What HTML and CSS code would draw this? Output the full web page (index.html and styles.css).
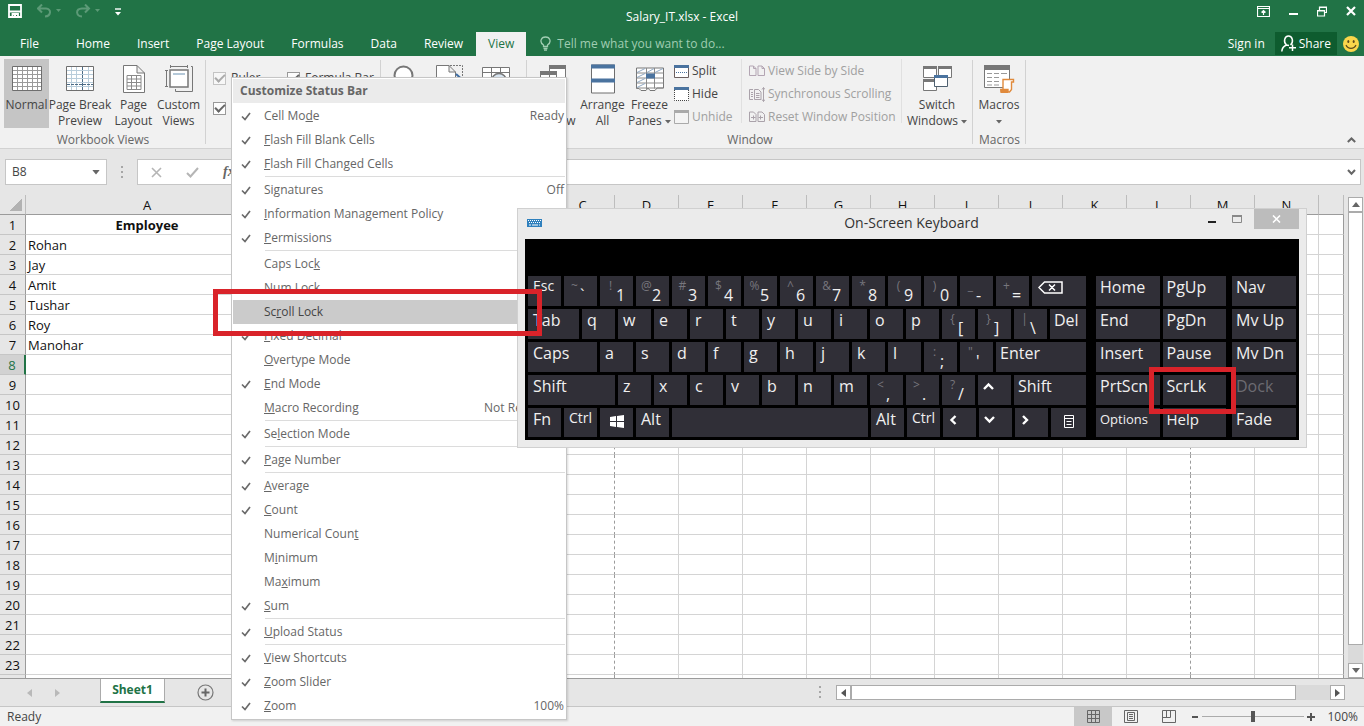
FILE: index.html
```html
<!DOCTYPE html>
<html lang="en">
<head>
    <meta charset="UTF-8">
    <meta name="viewport" content="width=device-width, initial-scale=1.0">
    <title>Salary_IT.xlsx - Excel</title>
    <link rel="stylesheet" href="styles.css">
</head>
<body>

<svg class="symbols" width="0" height="0">
    <symbol id="check" viewBox="0 0 10 9"><path d="M1 4.5 L4 7.5 L9 1" fill="none" stroke="#6a6a6a" stroke-width="1.7"/></symbol>
    <symbol id="down" viewBox="0 0 6 4"><path d="M0 0 H6 L3 3.5 Z" fill="currentColor"/></symbol>
</svg>

<header>
    <div class="title-bar">
        <div class="quick">
            <button aria-label="Save"><svg width="14" height="14" viewBox="0 0 14 14"><path d="M1 1 H13 V13 H1 Z M1 7.5 H13 M4.5 13 V10 H10 V13" fill="none" stroke="#fff" stroke-width="1.8"/><path d="M6 10 h2 v3 h-2 z" fill="#fff"/></svg></button>
            <button class="faded" aria-label="Undo"><svg width="24" height="14" viewBox="0 0 24 14"><path d="M1 4.5 H9 C15 5 14 12 8 12.5 M5 0.5 L1 4.5 L5 8.5" fill="none" stroke="currentColor" stroke-width="2"/><path d="M19 5 h5 l-2.5 3 z" fill="currentColor"/></svg></button>
            <button class="faded" aria-label="Redo"><svg width="24" height="14" viewBox="0 0 24 14"><path d="M13 4.5 H6 C-1 5 0 12 6 12.5 M9 0.5 L13 4.5 L9 8.5" fill="none" stroke="currentColor" stroke-width="2"/><path d="M19 5 h5 l-2.5 3 z" fill="currentColor"/></svg></button>
            <button aria-label="Customize toolbar"><svg width="6" height="8" viewBox="0 0 6 8"><path d="M0 1 H6" stroke="#fff" stroke-width="1.4"/><path d="M0 4 h6 l-3 3.5 z" fill="#fff"/></svg></button>
        </div>
        <h1>Salary_IT.xlsx - Excel</h1>
        <div class="window-buttons">
            <button aria-label="Ribbon options"><svg width="13" height="11" viewBox="0 0 13 11"><path d="M.5 .5 H12.5 V10.5 H.5 Z M.5 2.5 H12.5 M6.5 9 V4.5 M4.5 6.5 L6.5 4.5 L8.5 6.5" fill="none" stroke="#fff" stroke-width="1.2"/></svg></button>
            <button aria-label="Minimize"><svg width="9" height="11" viewBox="0 0 9 11"><path d="M0 8 H9" stroke="#fff" stroke-width="2"/></svg></button>
            <button aria-label="Restore"><svg width="10" height="11" viewBox="0 0 10 11"><path d="M2.5 4 V1 H9.5 V6.5 H7.5 M.5 4.5 H7.5 V10 H.5 Z M.5 5 H7.5 M2.5 1.5 H9.5" fill="none" stroke="#fff" stroke-width="1.2"/></svg></button>
            <button aria-label="Close"><svg width="10" height="10" viewBox="0 0 10 10"><path d="M1 1 L9 9 M9 1 L1 9" stroke="#fff" stroke-width="2.2"/></svg></button>
        </div>
    </div>
    <nav class="tabs">
        <a href="#" class="file">File</a>
        <a href="#">Home</a>
        <a href="#">Insert</a>
        <a href="#">Page Layout</a>
        <a href="#">Formulas</a>
        <a href="#">Data</a>
        <a href="#">Review</a>
        <a href="#" class="active">View</a>
        <label class="tell">
            <svg width="11" height="15" viewBox="0 0 11 15"><path d="M3.5 10.5 V9 C-1 6 1 1 5.500 1 C10 1 12 6 7.500 9 V10.500 Z M3.500 12.500 H7.500 M4 14.200 H7" fill="none" stroke="#a0cdb2" stroke-width="1.300"/></svg>
            <input type="text" placeholder="Tell me what you want to do..." aria-label="Tell me what you want to do">
        </label>
        <a href="#" class="sign-in">Sign in</a>
        <button class="share"><svg width="16" height="17" viewBox="0 0 16 17"><path d="M.8 16.500 C1 12.500 3 11 5.500 10 C2 7 3.500 1 7.500 1 C11.500 1 13 7 9.500 10 M5.500 10 L8 10.500 M11.500 9.500 V16 M8 12.800 H15" fill="none" stroke="#fff" stroke-width="1.500"/></svg>Share</button>
        <button class="smiley" aria-label="Feedback"><svg width="16" height="16" viewBox="0 0 16 16"><circle cx="8" cy="8" r="8" fill="#fbd64b"/><ellipse cx="5.300" cy="5.500" rx="1" ry="1.500" fill="#5d4a1b"/><ellipse cx="10.700" cy="5.500" rx="1" ry="1.500" fill="#5d4a1b"/><path d="M3 9 C5 13.500 11 13.500 13 9" fill="none" stroke="#5d4a1b" stroke-width="1.200"/></svg></button>
    </nav>
</header>

<section class="ribbon">
    <div class="group views">
        <div class="tools">
            <button class="big on"><svg width="30" height="26" viewBox="0 0 30 26"><path d="M.5 .5 H29.500 V24.500 H.5 Z" fill="#fff" stroke="#6e6e6e"/><path d="M1 4.500 H29 M1 8.500 H29 M1 12.500 H29 M1 16.500 H29 M1 20.500 H29 M5.500 1 V24 M10.500 1 V24 M15.500 1 V24 M20.500 1 V24 M25.500 1 V24" stroke="#9a9a9a"/></svg><span>Normal</span></button>
            <button class="big"><svg width="28" height="26" viewBox="0 0 28 26"><path d="M.5 .5 H27.500 V24.500 H.5 Z" fill="#fff" stroke="#6e6e6e"/><path d="M1 4.500 H27 M1 8.500 H27 M1 12.500 H27 M1 16.500 H27 M1 20.500 H27 M5.500 1 V24 M10.500 1 V24 M22.500 1 V24" stroke="#b9cddb"/><path d="M16.500 1 V24 M1 18.500 H27" stroke="#4c6b85" stroke-dasharray="3 1"/></svg><span>Page Break<br>Preview</span></button>
            <button class="big"><svg width="22" height="28" viewBox="0 0 22 28"><path d="M.5 .5 H14 L21.500 8 V27.500 H.5 Z M14 .5 V8 H21.500" fill="#fff" stroke="#777"/><path d="M4 10.500 H18 V24.500 H4 Z M4 14 H18 M4 17.500 H18 M4 21 H18 M8.500 10.500 V24.500 M13.500 10.500 V24.500" fill="none" stroke="#8a8a8a"/></svg><span>Page<br>Layout</span></button>
            <button class="big"><svg width="28" height="28" viewBox="0 0 28 28"><path d="M1.500 5 V22 M0 5.500 H3 M0 21.500 H3 M5 1.500 H23 M5.500 0 V3 M22.500 0 V3 M26 1.500 H27.500 V26.500 H10.500 V24" fill="none" stroke="#777"/><path d="M5 5 H23 V22 H5 Z" fill="#fff" stroke="#777" stroke-width="1.500"/><path d="M8 8 H20 V10 H8 Z" fill="#b4c8d8"/></svg><span>Custom<br>Views</span></button>
        </div>
        <h2>Workbook Views</h2>
    </div>
    <div class="group show">
        <div class="tools">
            <label><input type="checkbox" checked disabled>Ruler</label>
            <label><input type="checkbox" checked>Formula Bar</label>
            <label><input type="checkbox" checked>Gridlines</label>
            <label><input type="checkbox" checked>Headings</label>
        </div>
        <h2>Show</h2>
    </div>
    <div class="group zoom">
        <div class="tools">
            <button class="big"><svg width="22" height="28" viewBox="0 0 22 28"><circle cx="10.500" cy="10.500" r="9" fill="#fff" stroke="#777" stroke-width="2"/><path d="M16 17 L21 26" stroke="#777" stroke-width="3"/></svg><span>Zoom</span></button>
            <button class="big"><svg width="28" height="28" viewBox="0 0 28 28"><path d="M.5 .5 H13 L19.500 7 V27.500 H.5 Z M13 .5 V7 H19.500" fill="#fff" stroke="#777"/><path d="M14 .5 H26.500 V27" fill="none" stroke="#777" stroke-dasharray="2 1"/><path d="M14 13 H24 M20 9 L24.500 13 L20 17" fill="none" stroke="#3e6da3" stroke-width="2"/></svg><span>100%</span></button>
            <button class="big"><svg width="28" height="28" viewBox="0 0 28 28"><path d="M.5 2.500 H27.500 V26.500 H.5 Z M.5 7.500 H27.500 M9.500 2.500 V26 M18.500 2.500 V26" fill="#fff" stroke="#777"/><circle cx="17" cy="16" r="7.500" fill="#d9e6f2" stroke="#777" stroke-width="1.600"/></svg><span>Zoom to<br>Selection</span></button>
        </div>
        <h2>Zoom</h2>
    </div>
    <div class="group window">
        <div class="tools">
            <button class="big"><svg width="28" height="28" viewBox="0 0 28 28"><path d="M10.500 .5 H26.500 V14.500 H10.500 Z M1.500 7.500 H17.500 V20.500 H1.500 Z" fill="#fff" stroke="#777"/><path d="M10 0 H27 V4 H10 Z M1 6 H18 V10 H1 Z" fill="#777"/><path d="M10.500 16.500 H27.500 V27.500 H10.500 Z" fill="#fff" stroke="#3e6da3"/></svg><span>New<br>Window</span></button>
            <button class="big"><svg width="24" height="29" viewBox="0 0 24 29"><path d="M.5 .5 H23.500 V28.500 H.5 Z" fill="#fff" stroke="#6e6e6e"/><path d="M0 0 H24 V4 H0 Z M0 14 H24 V18 H0 Z" fill="#4a739f"/></svg><span>Arrange<br>All</span></button>
            <button class="big"><svg width="28" height="27" viewBox="0 0 28 27"><path d="M.5 2.500 H27.500 V22.500 H21 L19 25 H14 L12 22.500 L10 25 H5 L3 23 H.5 Z" fill="#fff" stroke="#777"/><path d="M.5 7.500 H27.500 M.5 12.500 H27.500 M.5 17.500 H27.500 M.5 22.500 H27.500 M10.500 2.500 V24 M18.500 2.500 V23" stroke="#8a8a8a"/><path d="M1 7 L9 3 M1 12 L9 8 M1 17 L9 13 M1 22 L9 18 M11 7 L18 3 M19 7 L27 3" stroke="#8fa9c4"/><path d="M10 8 H19 V13 H10 Z" fill="#4a739f"/></svg><span>Freeze<br>Panes <svg class="arrow"><use href="#down"/></svg></span></button>
            <div class="stack narrow">
                <button><svg width="15" height="13" viewBox="0 0 15 13"><path d="M.5 .5 H14.500 V12.500 H.5 Z" fill="#fff" stroke="#6b5f5f"/><path d="M0 0 H15 V3 H0 Z" fill="#4a739f"/><path d="M2 7.500 H13" stroke="#4a739f" stroke-dasharray="1 1"/></svg>Split</button>
                <button><svg width="15" height="14" viewBox="0 0 15 14"><path d="M.5 3 V13.500 H14.500 V3" fill="#fff" stroke="#444" stroke-dasharray="1 1"/><path d="M0 0 H15 V3 H0 Z" fill="#4a739f"/></svg>Hide</button>
                <button disabled><svg width="15" height="14" viewBox="0 0 15 14"><path d="M.5 .5 H14.500 V13.500 H.5 Z" fill="#f4f4f4" stroke="#aaa"/><path d="M0 0 H15 V3 H0 Z" fill="#aaa"/></svg>Unhide</button>
            </div>
            <div class="stack wide">
                <button disabled><svg width="16" height="12" viewBox="0 0 16 12"><path d="M.5 1 H4.500 L7 3.500 V10.500 H.5 Z M4.500 1 V3.500 H7 M9 1 H13 L15.500 3.500 V10.500 H9 Z M13 1 V3.500 H15.500" fill="none" stroke="#b3a5b3"/></svg>View Side by Side</button>
                <button disabled><svg width="16" height="15" viewBox="0 0 16 15"><path d="M5.500 2.500 H9.500 L12 5 V12.500 H5.500 Z M7 6.500 H10.500 M7 8.500 H10.500 M7 10.500 H10.500 M4 2.500 H.5 V12.500 H4 M2 5.500 H4 M2 7.500 H4 M2 9.500 H4 M14.500 .5 V14.500 M13 2.500 L14.500 .5 L16 2.500 M13 12.500 L14.500 14.500 L16 12.500" fill="none" stroke="#aaa2aa"/></svg>Synchronous Scrolling</button>
                <button disabled><svg width="16" height="12" viewBox="0 0 16 12"><path d="M.5 1 H4.500 L7 3.500 V10.500 H.5 Z M9 1 H13 L15.500 3.500 V10.500 H9 Z M2 6.500 H6.500 M4.500 4.500 V8.500 M9.500 6.500 H14 M11.500 4.500 V8.500" fill="none" stroke="#aaa2aa"/></svg>Reset Window Position</button>
            </div>
            <button class="big"><svg width="29" height="26" viewBox="0 0 29 26"><path d="M.5 .5 H13.500 V11.500 H.5 Z M15.500 .5 H28.500 V11.500 H15.500 Z M.5 13.500 H13.500 V24.500 H.5 Z" fill="#fff" stroke="#777"/><path d="M0 0 H14 V3 H0 Z M15 0 H29 V3 H15 Z M0 13 H14 V16 H0 Z" fill="#777"/><path d="M11.500 9.500 H24.500 V20.500 H11.500 Z" fill="#fff" stroke="#4e6070"/><path d="M11 9 H25 V12 H11 Z" fill="#4a739f"/></svg><span>Switch<br>Windows <svg class="arrow"><use href="#down"/></svg></span></button>
        </div>
        <h2>Window</h2>
    </div>
    <div class="group macros">
        <div class="tools">
            <button class="big"><svg width="31" height="28" viewBox="0 0 31 28"><path d="M.5 .5 H25.500 V22.500 H.5 Z" fill="#fff" stroke="#777"/><path d="M0 0 H26 V5 H0 Z" fill="#777"/><path d="M3 8.500 H8 M10 8.500 H15 M17 8.500 H23 M3 12.500 H8 M10 12.500 H15 M3 16.500 H8 M10 16.500 H15 M3 20 H8 M10 20 H15" stroke="#999"/><path d="M19 24 V14.500 H29.500 V17 H27.500 V24.500 L25.500 27 H17 V24.500 H24 V27" fill="#fff" stroke="#e08a3c" stroke-width="1.400"/><path d="M16 24 H24 V28 H17 Z" fill="#e08a3c"/></svg><span>Macros<br><svg class="arrow"><use href="#down"/></svg></span></button>
        </div>
        <h2>Macros</h2>
    </div>
    <button class="collapse" aria-label="Collapse the ribbon"><svg width="9" height="6" viewBox="0 0 9 6"><path d="M.8 5 L4.500 1.500 L8.200 5" fill="none" stroke="#666" stroke-width="2"/></svg></button>
</section>

<div class="formula-bar">
    <label class="name-box"><input type="text" value="B8" aria-label="Name box"><svg width="8" height="5" viewBox="0 0 6 4"><use href="#down"/></svg></label>
    <span class="dots"></span>
    <div class="formula">
        <button aria-label="Cancel"><svg width="11" height="11" viewBox="0 0 11 11"><path d="M1 1 L10 10 M10 1 L1 10" stroke="#b5b5b5" stroke-width="1.600"/></svg></button>
        <button aria-label="Enter"><svg width="13" height="11" viewBox="0 0 13 11"><path d="M1 6 L4.500 9.500 L12 1" fill="none" stroke="#b5b5b5" stroke-width="2"/></svg></button>
        <button class="fx" aria-label="Insert function">fx</button>
        <input type="text" aria-label="Formula">
        <svg width="9" height="7" viewBox="0 0 9 7"><path d="M1 1 L4.500 4.800 L8 1" fill="none" stroke="#666" stroke-width="2"/></svg>
    </div>
</div>

<main>
    <div class="sheet">
        <table id="grid">
            <colgroup>
                <col class="col-head"><col class="col-a"><col class="col-b">
                <col span="12" class="col-n"><col>
            </colgroup>
        </table>
    </div>
    <div class="vscroll">
        <button aria-label="Scroll up"><svg width="8" height="5" viewBox="0 0 8 5"><path d="M0 5 H8 L4 0 Z" fill="#666"/></svg></button>
        <div class="track"><div class="thumb"></div></div>
        <button aria-label="Scroll down"><svg width="8" height="5" viewBox="0 0 8 5"><path d="M0 0 H8 L4 5 Z" fill="#666"/></svg></button>
    </div>
</main>

<div class="sheet-bar">
    <button class="arrow-nav" aria-label="Previous sheet"><svg width="5" height="8" viewBox="0 0 5 8"><path d="M5 0 V8 L0 4 Z" fill="#b9b9b9"/></svg></button>
    <button class="arrow-nav" aria-label="Next sheet"><svg width="5" height="8" viewBox="0 0 5 8"><path d="M0 0 V8 L5 4 Z" fill="#b9b9b9"/></svg></button>
    <button class="sheet-tab">Sheet1</button>
    <button class="new-sheet" aria-label="New sheet"><svg width="17" height="17" viewBox="0 0 17 17"><circle cx="8.500" cy="8.500" r="7.500" fill="none" stroke="#777" stroke-width="1.200"/><path d="M8.500 4.500 V12.500 M4.500 8.500 H12.500" stroke="#666" stroke-width="2"/></svg></button>
    <span class="dots"></span>
    <div class="hscroll">
        <button aria-label="Scroll left"><svg width="5" height="8" viewBox="0 0 5 8"><path d="M5 0 V8 L0 4 Z" fill="#555"/></svg></button>
        <div class="track"><div class="thumb"></div></div>
        <button aria-label="Scroll right"><svg width="5" height="8" viewBox="0 0 5 8"><path d="M0 0 V8 L5 4 Z" fill="#555"/></svg></button>
    </div>
</div>

<footer>
    <span class="ready">Ready</span>
    <button class="view on" aria-label="Normal view"><svg width="13" height="13" viewBox="0 0 13 13"><path d="M.5 .5 H12.500 V12.500 H.5 Z M.5 4.500 H12.500 M.5 8.500 H12.500 M4.500 .5 V12.500 M8.500 .5 V12.500" fill="none" stroke="#666"/></svg></button>
    <button class="view" aria-label="Page layout view"><svg width="14" height="13" viewBox="0 0 14 13"><path d="M.5 .5 H13.500 V12.500 H.5 Z M3.500 2.500 H10.500 V10.500 H3.500 Z M5 4.500 H9 M5 6.500 H9 M5 8.500 H9" fill="none" stroke="#666"/></svg></button>
    <button class="view" aria-label="Page break view"><svg width="14" height="13" viewBox="0 0 14 13"><path d="M.5 .5 H13.500 V12.500 H.5 Z M.5 7.500 H8.500 V.5 M4.500 .5 V7.500" fill="none" stroke="#666"/></svg></button>
    <button class="step" aria-label="Zoom out"><svg width="8" height="8" viewBox="0 0 8 8"><path d="M1 4 H7" stroke="#555" stroke-width="2"/></svg></button>
    <input type="range" min="0" max="100" value="50" aria-label="Zoom level">
    <button class="step" aria-label="Zoom in"><svg width="8" height="8" viewBox="0 0 8 8"><path d="M0 4 H8 M4 0 V8" stroke="#555" stroke-width="2"/></svg></button>
    <span class="percent">100%</span>
</footer>

<div class="menu">
    <h2>Customize Status Bar</h2>
    <button class="checked"><svg><use href="#check"/></svg><span>Cell Mo<u>d</u>e</span><em>Ready</em></button>
    <button class="checked"><svg><use href="#check"/></svg><span><u>F</u>lash Fill Blank Cells</span></button>
    <button class="checked"><svg><use href="#check"/></svg><span><u>F</u>lash Fill Changed Cells</span></button>
    <hr>
    <button class="checked"><svg><use href="#check"/></svg><span>Si<u>g</u>natures</span><em>Off</em></button>
    <button class="checked"><svg><use href="#check"/></svg><span><u>I</u>nformation Management Policy</span></button>
    <button class="checked"><svg><use href="#check"/></svg><span><u>P</u>ermissions</span></button>
    <hr>
    <button><svg></svg><span>Caps Loc<u>k</u></span><em>Off</em></button>
    <button><svg></svg><span><u>N</u>um Lock</span><em>Off</em></button>
    <button class="hover"><svg></svg><span>Sc<u>r</u>oll Lock</span><em>Off</em></button>
    <button class="checked"><svg><use href="#check"/></svg><span><u>F</u>ixed Decimal</span><em>Off</em></button>
    <button><svg></svg><span><u>O</u>vertype Mode</span></button>
    <button class="checked"><svg><use href="#check"/></svg><span><u>E</u>nd Mode</span></button>
    <button><svg></svg><span><u>M</u>acro Recording</span><em>Not Recording</em></button>
    <hr>
    <button class="checked"><svg><use href="#check"/></svg><span>Se<u>l</u>ection Mode</span></button>
    <hr>
    <button class="checked"><svg><use href="#check"/></svg><span><u>P</u>age Number</span></button>
    <hr>
    <button class="checked"><svg><use href="#check"/></svg><span><u>A</u>verage</span></button>
    <button class="checked"><svg><use href="#check"/></svg><span><u>C</u>ount</span></button>
    <button><svg></svg><span>Numerical Coun<u>t</u></span></button>
    <button><svg></svg><span>M<u>i</u>nimum</span></button>
    <button><svg></svg><span>Ma<u>x</u>imum</span></button>
    <button class="checked"><svg><use href="#check"/></svg><span><u>S</u>um</span></button>
    <hr>
    <button class="checked"><svg><use href="#check"/></svg><span><u>U</u>pload Status</span></button>
    <hr>
    <button class="checked"><svg><use href="#check"/></svg><span><u>V</u>iew Shortcuts</span></button>
    <button class="checked"><svg><use href="#check"/></svg><span><u>Z</u>oom Slider</span></button>
    <button class="checked"><svg><use href="#check"/></svg><span><u>Z</u>oom</span><em>100%</em></button>
</div>

<div class="keyboard">
    <div class="kb-title">
        <svg width="15" height="8" viewBox="0 0 15 8"><path d="M0 0 H15 V8 H0 Z" fill="#2f80bd"/><path d="M1 1.500 H14 M2 3.500 H14" stroke="#fff" stroke-dasharray="1 1"/><path d="M2 6 H4 M5 6 H11 M12 6 H13" stroke="#fff"/></svg>
        <h2>On-Screen Keyboard</h2>
        <button aria-label="Minimize"><svg width="8" height="12" viewBox="0 0 8 12"><path d="M0 7 H8" stroke="#222" stroke-width="2"/></svg></button>
        <button aria-label="Maximize"><svg width="10" height="8" viewBox="0 0 10 8"><path d="M.5 1 H9.500 V7.500 H.5 Z" fill="none" stroke="#888"/><path d="M0 1 H10" stroke="#888" stroke-width="2"/></svg></button>
        <button class="kb-close" aria-label="Close"><svg width="9" height="8" viewBox="0 0 9 8"><path d="M1 0.500 L8 7.500 M8 .5 L1 7.500" stroke="#fff" stroke-width="1.600"/></svg></button>
    </div>
    <div class="keys">
        <div class="block main-keys">
            <div class="row">
                <button class="mid">Esc</button><button class="dual"><small>~</small>`</button><button class="dual"><small>!</small>1</button><button class="dual"><small>@</small>2</button><button class="dual"><small>#</small>3</button><button class="dual"><small>$</small>4</button><button class="dual"><small>%</small>5</button><button class="dual"><small>^</small>6</button><button class="dual"><small>&amp;</small>7</button><button class="dual"><small>*</small>8</button><button class="dual"><small>(</small>9</button><button class="dual"><small>)</small>0</button><button class="dual"><small>_</small>-</button><button class="dual"><small>+</small>=</button>
                <button class="grow glyph" aria-label="Backspace"><svg width="25" height="13" viewBox="0 0 25 13"><path d="M1 6.500 L6.500 1 H24 V12 H6.500 Z M11 3.500 L17 9.500 M17 3.500 L11 9.500" fill="none" stroke="#fff" stroke-width="1.500"/></svg></button>
            </div>
            <div class="row">
                <button class="tab">Tab</button><button>q</button><button>w</button><button>e</button><button>r</button><button>t</button><button>y</button><button>u</button><button>i</button><button>o</button><button>p</button><button class="dual"><small>{</small>[</button><button class="dual"><small>}</small>]</button><button class="dual"><small>|</small>\</button><button class="grow">Del</button>
            </div>
            <div class="row">
                <button class="caps">Caps</button><button>a</button><button>s</button><button>d</button><button>f</button><button>g</button><button>h</button><button>j</button><button>k</button><button>l</button><button class="dual"><small>:</small>;</button><button class="dual"><small>"</small>'</button><button class="grow">Enter</button>
            </div>
            <div class="row">
                <button class="shift">Shift</button><button>z</button><button>x</button><button>c</button><button>v</button><button>b</button><button>n</button><button>m</button><button class="dual"><small>&lt;</small>,</button><button class="dual"><small>&gt;</small>.</button><button class="dual"><small>?</small>/</button><button class="glyph" aria-label="Up"><svg width="11" height="12" viewBox="0 0 11 12"><path d="M1 9 L5.500 4.500 L10 9" fill="none" stroke="#fff" stroke-width="2.400"/></svg></button><button class="grow">Shift</button>
            </div>
            <div class="row">
                <button>Fn</button><button class="mid">Ctrl</button>
                <button class="glyph center" aria-label="Windows"><svg width="14" height="13" viewBox="0 0 14 13"><path d="M0 2 L6 1 V6 H0 Z M7 .9 L14 0 V6 H7 Z M0 7 H6 V12 L0 11 Z M7 7 H14 V13 L7 12.100 Z" fill="#fff"/></svg></button>
                <button>Alt</button><button class="grow" aria-label="Space"></button><button>Alt</button><button class="mid">Ctrl</button>
                <button class="glyph" aria-label="Left"><svg width="11" height="14" viewBox="0 0 11 14"><path d="M7.500 3 L3.500 7 L7.500 11" fill="none" stroke="#fff" stroke-width="2.400"/></svg></button>
                <button class="glyph" aria-label="Down"><svg width="11" height="12" viewBox="0 0 11 12"><path d="M1 4 L5.500 8.500 L10 4" fill="none" stroke="#fff" stroke-width="2.400"/></svg></button>
                <button class="glyph" aria-label="Right"><svg width="11" height="14" viewBox="0 0 11 14"><path d="M3 3 L7 7 L3 11" fill="none" stroke="#fff" stroke-width="2.400"/></svg></button>
                <button class="glyph center last" aria-label="Menu"><svg width="10" height="13" viewBox="0 0 10 13"><path d="M.5 .5 H9.500 V12.500 H.5 Z M.5 3.500 H9.500 M2.500 6.500 H7.500 M2.500 9.500 H7.500" fill="none" stroke="#fff"/></svg></button>
            </div>
        </div>
        <div class="block nav-keys">
            <div class="row"><button>Home</button><button>PgUp</button></div>
            <div class="row"><button>End</button><button>PgDn</button></div>
            <div class="row"><button>Insert</button><button>Pause</button></div>
            <div class="row"><button>PrtScn</button><button>ScrLk</button></div>
            <div class="row"><button class="small">Options</button><button class="help">Help</button></div>
        </div>
        <div class="block side-keys">
            <div class="row"><button>Nav</button></div>
            <div class="row"><button>Mv Up</button></div>
            <div class="row"><button>Mv Dn</button></div>
            <div class="row"><button disabled>Dock</button></div>
            <div class="row"><button>Fade</button></div>
        </div>
    </div>
    <div class="mark mark-key"></div>
</div>

<div class="mark mark-item"></div>

<script>
    var employees = ['Rohan', 'Jay', 'Amit', 'Tushar', 'Roy', 'Manohar'];
    var letters = 'ABCDEFGHIJKLMN';
    var lastRow = 23;
    var grid = document.getElementById('grid');
    var html = '<tr><th class="corner"></th>';

    for (var i = 0; i < letters.length; i++) {
        html += '<th>' + letters[i] + '</th>';
    }
    html += '<th></th></tr>';

    // one extra empty row runs under the sheet tabs
    for (var row = 1; row <= lastRow + 1; row++) {
        html += '<tr' + (row === 8 ? ' class="current"' : '') + '><th>' + (row <= lastRow ? row : '') + '</th>';
        for (var col = 0; col < 15; col++) {
            var text = '';
            if (col === 0 && row === 1) text = '<b>Employee</b>';
            if (col === 0 && row > 1 && employees[row - 2]) text = employees[row - 2];
            // page breaks after columns C and L
            html += '<td' + (col === 2 || col === 11 ? ' class="break"' : '') + '>' + text + '</td>';
        }
        html += '</tr>';
    }
    grid.insertAdjacentHTML('beforeend', '<tbody>' + html + '</tbody>');
</script>

</body>
</html>
```
FILE: styles.css
```css
* {
    box-sizing: border-box;
}
body {
    margin: 0;
    height: 100vh;
    display: flex;
    flex-direction: column;
    overflow: hidden;
    position: relative;
    font-family: "Open Sans", "Noto Sans", sans-serif;
    font-size: 12px;
    line-height: 16px;
    color: #444;
    background-color: #f1f1f1;
}
button, input {
    font: inherit;
    color: inherit;
    background: none;
    border: none;
    padding: 0;
    margin: 0;
}
h1, h2 {
    margin: 0;
    font-size: 12px;
    font-weight: normal;
}
svg {
    display: block;
    flex: none;
}
.symbols {
    position: absolute;
}

/* title bar and tabs */
header {
    background-color: #217346;
    color: #fff;
}
.title-bar {
    display: grid;
    grid-template-columns: 1fr auto 1fr;
    height: 32px;
    padding: 4px 8px;
}
.title-bar h1 {
    padding-top: 5px;
}
.quick {
    display: flex;
    align-items: flex-start;
    gap: 15px;
}
.quick button:last-child {
    padding-top: 4px;
}
.faded {
    color: #5c9a77;
}
.window-buttons {
    display: flex;
    justify-content: flex-end;
    align-items: flex-start;
    gap: 19px;
    padding-top: 2px;
}
.tabs {
    display: flex;
    height: 24px;
}
.tabs a {
    color: #fff;
    text-decoration: none;
    padding: 4px 13px 4px 14px;
}
.tabs .file {
    padding: 4px 23px 4px 20px;
}
.tabs .active {
    background-color: #f1f1f1;
    color: #217346;
    padding: 4px 12px;
}
.tell {
    display: flex;
    flex: 1;
    gap: 6px;
    padding: 4px 14px;
}
.tell input {
    flex: 1;
    height: 16px;
}
.tell input::placeholder {
    color: #a0cdb2;
    opacity: 1;
}
.tabs .sign-in {
    padding: 4px 10px;
}
.share {
    display: flex;
    align-items: center;
    gap: 2px;
    height: 23px;
    padding: 0 6px;
    background-color: #0e5c2f;
}
.smiley {
    padding: 0 5px 0 6px;
}

/* ribbon */
.ribbon {
    display: flex;
    height: 93px;
    padding-top: 3px;
    border-bottom: 1px solid #d2d2d2;
}
.group {
    display: flex;
    flex-direction: column;
    position: relative;
    flex: none;
}
.group::after {
    content: "";
    position: absolute;
    right: 0;
    top: 1px;
    bottom: 4px;
    width: 1px;
    background-color: #d2d2d2;
}
.group h2 {
    text-align: center;
    color: #666;
}
.tools {
    display: flex;
    height: 73px;
}
.big {
    display: flex;
    flex-direction: column;
    align-items: center;
    height: 69px;
    width: 52px;
    padding-top: 5px;
    text-align: center;
    white-space: nowrap;
    flex: none;
}
.big > svg {
    height: 30px;
    margin-bottom: 3px;
}
.big.on {
    background-color: #c5c5c5;
}
.arrow {
    display: inline-block;
    width: 6px;
    height: 4px;
    vertical-align: middle;
    color: #666;
}
.views {
    width: 206px;
}
.views .tools {
    padding-left: 4px;
}
.views .big {
    width: 45px;
}
.views .big:nth-child(2) {
    width: 62px;
}
.show {
    width: 175px;
}
.show .tools {
    display: grid;
    grid-template-columns: 74px auto;
    align-content: start;
    padding: 11px 7px;
    row-gap: 14px;
}
.show label {
    display: flex;
    align-items: center;
    gap: 5px;
    height: 16px;
    white-space: nowrap;
}
.show input {
    appearance: none;
    width: 13px;
    height: 13px;
    border: 1px solid #999;
    background-color: #fdfdfd;
    display: grid;
    place-content: center;
}
.show input::before {
    content: "";
    width: 8px;
    height: 4px;
    border-left: 2px solid #666;
    border-bottom: 2px solid #666;
    transform: rotate(-45deg);
    margin-top: -3px;
}
.show input:disabled {
    opacity: 0.5;
}
.zoom {
    width: 146px;
}
.zoom .big {
    width: 46px;
}
.window {
    width: 446px;
}
.window .big:nth-child(2), .window .big:nth-child(3) {
    width: 47px;
}
.stack {
    display: flex;
    flex-direction: column;
    gap: 7px;
    padding: 4px 0;
    height: 64px;
}
.stack button {
    display: flex;
    align-items: center;
    gap: 3px;
    height: 16px;
    white-space: nowrap;
}
.stack button:disabled {
    color: #a0a0a0;
}
.stack.narrow {
    width: 69px;
    padding-left: 1px;
    border-right: 1px solid #e0e0e0;
}
.stack.wide {
    width: 160px;
    padding-left: 7px;
    border-right: 1px solid #e0e0e0;
}
.window .big:last-child {
    width: 70px;
}
.macros {
    width: 53px;
}
.collapse {
    margin-left: auto;
    align-self: flex-end;
    padding: 0 8px 5px 0;
}

/* formula bar */
.formula-bar {
    display: flex;
    padding: 10px 3px 10px 5px;
    background-color: #e6e6e6;
}
.name-box, .formula {
    display: flex;
    align-items: center;
    height: 26px;
    border: 1px solid #c6c6c6;
    background-color: #fff;
}
.name-box {
    width: 102px;
    padding: 0 6px;
    color: #666;
}
.name-box input {
    flex: 1;
    min-width: 0;
    color: #444;
}
.dots {
    width: 2px;
    height: 12px;
    background-image: repeating-linear-gradient(#a6a6a6 0 2px, transparent 2px 5px);
}
.formula-bar .dots {
    margin: 7px 14px;
}
.formula {
    flex: 1;
    padding: 0 4px 0 13px;
}
.formula button {
    margin-right: 24px;
}
.formula .fx {
    font-family: "Liberation Serif", serif;
    font-style: italic;
    font-weight: bold;
    font-size: 14px;
    color: #666;
}
.formula input {
    flex: 1;
}

/* grid */
main {
    display: flex;
    flex: 1;
    min-height: 0;
    background-color: #e6e6e6;
    border-bottom: 1px solid #9b9b9b;
}
.sheet {
    flex: 1;
    overflow: hidden;
}
table {
    width: 100%;
    table-layout: fixed;
    border-collapse: separate;
    border-spacing: 0;
    font-size: 13px;
    line-height: 18px;
    color: #111;
}
.col-head {
    width: 26px;
}
.col-a {
    width: 243px;
}
.col-b {
    width: 282px;
}
.col-n {
    width: 64px;
}
th, td {
    height: 20px;
    padding: 0 2px;
    border-right: 1px solid #d4d4d4;
    border-bottom: 1px solid #d4d4d4;
}
td {
    background-color: #fff;
}
td b {
    display: block;
    text-align: center;
}
th {
    font-weight: normal;
    padding: 0;
    background-color: #e6e6e6;
}
th:first-child {
    border-right-color: #9b9b9b;
    border-bottom-color: #c6c6c6;
}
tr:first-child th {
    border-bottom-color: #9b9b9b;
    border-right-color: #bdbdbd;
}
th.corner {
    background-image: linear-gradient(135deg, transparent 50%, #b2b2b2 50%);
    background-size: 12px 12px;
    background-position: 10px 4px;
    background-repeat: no-repeat;
}
td:last-child {
    border-right-color: #9b9b9b;
}
td.break {
    border-right: 1px dashed #9b9b9b;
}
tr.current th {
    background-color: #d2d2d2;
    color: #217346;
    border-right: 2px solid #217346;
}

/* scroll bars */
.vscroll {
    display: flex;
    flex-direction: column;
    width: 20px;
    padding: 2px 1px 0 4px;
}
.vscroll button, .hscroll button {
    display: grid;
    place-content: center;
    width: 15px;
    height: 15px;
    border: 1px solid #ababab;
    background-color: #fff;
    flex: none;
}
.track {
    flex: 1;
    background-color: #dadada;
}
.thumb {
    border: 1px solid #ababab;
    background-color: #fff;
}
.vscroll .thumb {
    height: 96%;
}
.hscroll .thumb {
    width: 93%;
    height: 15px;
}

/* sheet tabs */
.sheet-bar {
    display: flex;
    height: 28px;
    background-color: #e6e6e6;
    border-bottom: 1px solid #c6c6c6;
}
.arrow-nav {
    width: 28px;
    display: grid;
    place-content: center;
}
.arrow-nav:first-child {
    margin-left: 15px;
}
.sheet-tab {
    height: 24px;
    width: 65px;
    margin: 0 32px 0 29px;
    background-color: #fff;
    border-bottom: 2px solid #217346;
    border-left: 1px solid #ababab;
    border-right: 1px solid #ababab;
    color: #217346;
    font-weight: bold;
}
.new-sheet {
    align-self: center;
}
.sheet-bar .dots {
    margin: 7px 15px 0 auto;
}
.hscroll {
    display: flex;
    width: calc(38% - 9px);
    margin: 6px 19px 0 0;
    height: 15px;
}

/* status bar */
footer {
    display: flex;
    align-items: center;
    height: 19px;
    padding: 0 6px 0 7px;
}
.ready {
    margin-right: auto;
}
.view {
    display: grid;
    place-content: center;
    width: 38px;
    height: 19px;
}
.view.on {
    background-color: #c8c8c8;
}
.step {
    padding: 0 3px;
}
footer input {
    appearance: none;
    width: 102px;
    height: 12px;
    background: linear-gradient(#ababab, #ababab) center / 100% 1px no-repeat;
}
footer input::-webkit-slider-thumb {
    appearance: none;
    width: 4px;
    height: 11px;
    background-color: #555;
}
.percent {
    margin-left: 9px;
}

/* status bar menu */
.menu {
    position: absolute;
    left: 231px;
    top: 77px;
    width: 336px;
    padding: 1px;
    border: 1px solid #c6c6c6;
    background-color: #fff;
    box-shadow: 1px 1px 2px rgba(0, 0, 0, 0.15);
    color: #666;
}
.menu h2 {
    height: 24px;
    margin-bottom: 1px;
    padding: 4px 7px;
    background-color: #ebebeb;
    font-weight: bold;
}
.menu button {
    display: flex;
    align-items: center;
    width: 100%;
    height: 24px;
    padding-right: 1px;
}
.menu button svg {
    width: 10px;
    height: 9px;
    margin: 0 13px 0 8px;
}
.menu button.hover {
    background-color: #cbcbcb;
    color: #444;
}
.menu em {
    margin-left: auto;
    font-style: normal;
}
.menu hr {
    height: 1px;
    margin: 0 0 1px 32px;
    border: none;
    background-color: #dcdcdc;
}

/* on-screen keyboard */
.keyboard {
    position: absolute;
    left: 517px;
    top: 208px;
    width: 790px;
    padding: 0 7px 7px;
    border: 1px solid #d0d0d0;
    background-color: #ebebeb;
}
.kb-title {
    display: flex;
    height: 30px;
    align-items: flex-start;
    color: #333;
}
.kb-title > svg {
    margin: 10px 0 0 2px;
}
.kb-title h2 {
    flex: 1;
    padding: 6px 0 0 81px;
    font-size: 14px;
    text-align: center;
}
.kb-title button {
    padding: 6px 8px;
}
.kb-title .kb-close {
    display: grid;
    place-content: center;
    width: 45px;
    height: 20px;
    margin-left: 4px;
    background-color: #bcbcbc;
}
.keys {
    display: flex;
    padding: 37px 3px 3px;
    background-color: #000;
}
.block {
    display: flex;
    flex-direction: column;
    gap: 3px;
}
.main-keys {
    flex: 1;
}
.nav-keys {
    width: 130px;
    margin: 0 6px 0 10px;
}
.side-keys {
    width: 64px;
}
.row {
    display: flex;
    gap: 3px;
}
.row button {
    display: flex;
    width: 33px;
    height: 30px;
    padding-left: 5px;
    background-color: #302f37;
    color: #f0f0f0;
    font-size: 16px;
    line-height: 22px;
    white-space: nowrap;
    align-items: flex-start;
}
.row:last-child button {
    height: 29px;
}
.nav-keys .row button, .side-keys .row button, .row .grow {
    flex: 1;
    padding-left: 4px;
}
.row .tab {
    width: 51px;
}
.row .caps {
    width: 69px;
}
.row .shift {
    width: 87px;
}
.row .last {
    width: 35px;
}
.row .mid {
    font-size: 14px;
    line-height: 20px;
}
.row .small {
    font-size: 13px;
}
.row .help {
    font-size: 15px;
}
.row button:disabled {
    color: #6c6b72;
}
.row .dual {
    padding-top: 8px;
}
.dual small {
    width: 11px;
    margin-top: -8px;
    font-size: 12px;
    line-height: 20px;
    color: #77767d;
}
.row .glyph {
    padding-top: 5px;
}
.row .grow.glyph {
    padding-left: 6px;
}
.row .center {
    padding: 7px 0 0;
    justify-content: center;
}

/* highlight frames */
.mark {
    position: absolute;
    border: 5px solid #d9232a;
    pointer-events: none;
}
.mark-item {
    left: 213px;
    top: 289px;
    width: 329px;
    height: 47px;
}
.mark-key {
    left: 631px;
    top: 158px;
    width: 87px;
    height: 47px;
}
```
